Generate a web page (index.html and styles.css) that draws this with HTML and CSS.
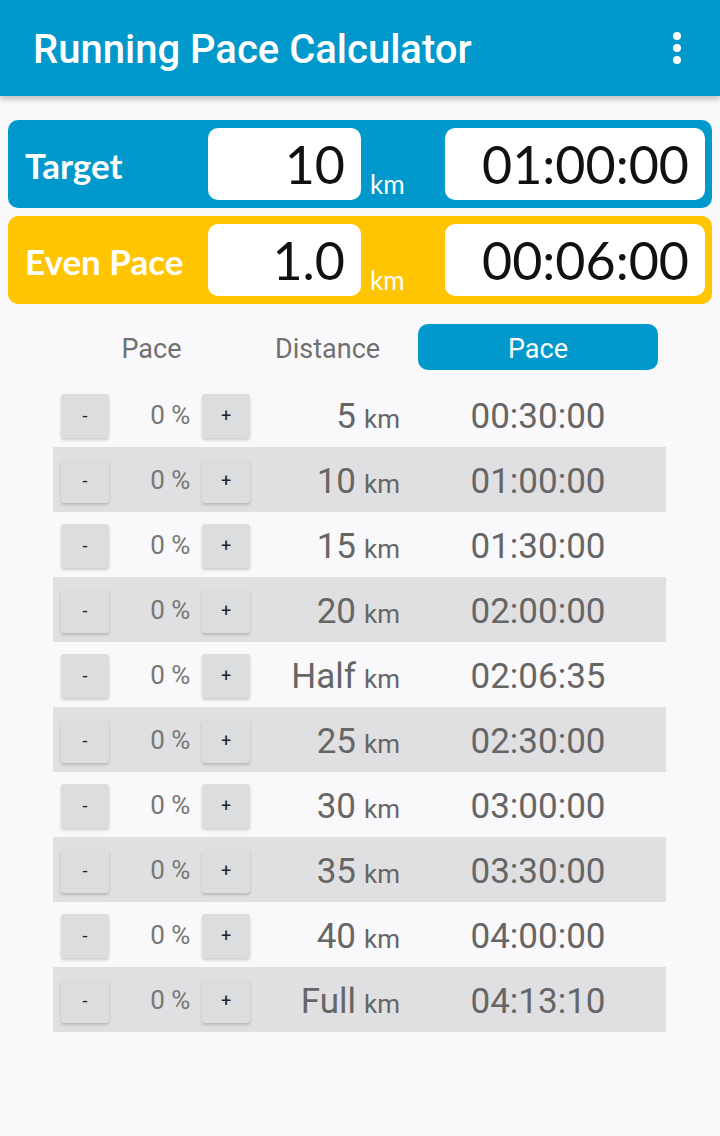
FILE: index.html
```html
<!DOCTYPE html>
<html>
<head>
<meta charset="utf-8">
<link rel="stylesheet" href="styles.css">
</head>
<body>
<header class="appbar">
  <h1 class="title">Running Pace Calculator</h1>
  <div class="menu"><span></span><span></span><span></span></div>
</header>
<main class="main">
  <section class="card card-blue">
    <div class="card-label">Target</div>
    <div class="box box-dist">10</div>
    <div class="unit">km</div>
    <div class="box box-time">01:00:00</div>
  </section>
  <section class="card card-yellow">
    <div class="card-label">Even Pace</div>
    <div class="box box-dist">1.0</div>
    <div class="unit">km</div>
    <div class="box box-time">00:06:00</div>
  </section>

  <div class="table">
    <div class="tabs">
      <div class="tab">Pace</div>
      <div class="tab tab-dist">Distance</div>
      <div class="tab tab-active">Pace</div>
    </div>
    <div class="row"><div class="adj"><button class="btn">-</button><span class="pct">0 %</span><button class="btn">+</button></div><div class="dist">5<span class="km">km</span></div><div class="time">00:30:00</div></div>
    <div class="row alt"><div class="adj"><button class="btn">-</button><span class="pct">0 %</span><button class="btn">+</button></div><div class="dist">10<span class="km">km</span></div><div class="time">01:00:00</div></div>
    <div class="row"><div class="adj"><button class="btn">-</button><span class="pct">0 %</span><button class="btn">+</button></div><div class="dist">15<span class="km">km</span></div><div class="time">01:30:00</div></div>
    <div class="row alt"><div class="adj"><button class="btn">-</button><span class="pct">0 %</span><button class="btn">+</button></div><div class="dist">20<span class="km">km</span></div><div class="time">02:00:00</div></div>
    <div class="row"><div class="adj"><button class="btn">-</button><span class="pct">0 %</span><button class="btn">+</button></div><div class="dist">Half<span class="km">km</span></div><div class="time">02:06:35</div></div>
    <div class="row alt"><div class="adj"><button class="btn">-</button><span class="pct">0 %</span><button class="btn">+</button></div><div class="dist">25<span class="km">km</span></div><div class="time">02:30:00</div></div>
    <div class="row"><div class="adj"><button class="btn">-</button><span class="pct">0 %</span><button class="btn">+</button></div><div class="dist">30<span class="km">km</span></div><div class="time">03:00:00</div></div>
    <div class="row alt"><div class="adj"><button class="btn">-</button><span class="pct">0 %</span><button class="btn">+</button></div><div class="dist">35<span class="km">km</span></div><div class="time">03:30:00</div></div>
    <div class="row"><div class="adj"><button class="btn">-</button><span class="pct">0 %</span><button class="btn">+</button></div><div class="dist">40<span class="km">km</span></div><div class="time">04:00:00</div></div>
    <div class="row alt"><div class="adj"><button class="btn">-</button><span class="pct">0 %</span><button class="btn">+</button></div><div class="dist">Full<span class="km">km</span></div><div class="time">04:13:10</div></div>
  </div>
</main>
</body>
</html>
```
FILE: styles.css
```css
* { box-sizing: border-box; }
html, body { margin: 0; padding: 0; }
body {
  width: 720px;
  height: 1136px;
  background: #f9f9fb;
  font-family: Roboto, "Liberation Sans", sans-serif;
  overflow: hidden;
}
.appbar {
  height: 96px;
  background: #0199cb;
  display: flex;
  align-items: center;
  justify-content: space-between;
  padding: 0 39px 0 33px;
  box-shadow: 0 3px 6px rgba(0,0,0,0.25);
  position: relative;
}
.title {
  margin: 0;
  color: #fff;
  font-family: Roboto, "Noto Sans", sans-serif;
  font-weight: 500;
  font-size: 40px;
  letter-spacing: 0;
  padding-top: 2px;
}
.menu {
  display: flex;
  flex-direction: column;
  gap: 4px;
  margin-top: 0;
}
.menu span {
  width: 8px;
  height: 8px;
  border-radius: 50%;
  background: #fff;
}
.main {
  padding: 24px 8px 0;
}
.card {
  height: 88px;
  border-radius: 10px;
  display: flex;
  align-items: center;
  padding: 8px 7px 8px 17px;
  margin-bottom: 8px;
}
.card-blue { background: #0199cb; }
.card-yellow { background: #ffc402; }
.card-label {
  width: 183px;
  color: #fff;
  font-family: Lato, sans-serif;
  font-weight: 700;
  font-size: 35px;
  padding-top: 2px;
}
.box {
  height: 72px;
  background: #fff;
  border-radius: 10px;
  display: flex;
  align-items: center;
  justify-content: flex-end;
  color: #111;
  font-family: Lato, sans-serif;
  font-size: 52px;
  padding-right: 16px;
}
.box-dist { width: 153px; }
.box-time { width: 260px; margin-left: auto; }
.unit {
  color: #fff;
  font-family: Lato, sans-serif;
  font-size: 26px;
  align-self: flex-end;
  margin: 0 0 0 9px;
}
.table {
  margin: 20px 46px 0 45px;
}
.tabs {
  display: grid;
  grid-template-columns: 197px 168px 240px;
  height: 46px;
  margin-bottom: 12px;
}
.tab {
  display: flex;
  align-items: center;
  justify-content: center;
  font-size: 27px;
  color: #707070;
  padding-top: 3px;
}
.tab-dist { justify-content: flex-start; padding-left: 25px; }
.tab-active {
  background: #0199cb;
  color: #fff;
  border-radius: 10px;
}
.row {
  height: 65px;
  display: grid;
  grid-template-columns: 197px 150px 18px 240px;
  grid-template-areas: "adj dist . time";
  align-items: center;
  color: #666;
}
.row.alt { background: #e0e0e2; }
.adj {
  grid-area: adj;
  display: flex;
  align-items: center;
  padding-left: 8px;
}
.btn {
  width: 48px;
  height: 44px;
  border: none;
  border-radius: 3px;
  background: #dcdddf;
  box-shadow: 0 2px 3px rgba(0,0,0,0.18);
  font-family: Roboto, sans-serif;
  font-size: 18px;
  color: #222;
  padding: 0;
  margin-top: 2px;
}
.pct {
  width: 94px;
  text-align: right;
  padding-right: 12px;
  font-size: 26px;
  color: #777;
}
.dist {
  grid-area: dist;
  text-align: right;
  font-size: 35px;
  padding-top: 4px;
}
.km {
  font-size: 26px;
  margin-left: 8px;
}
.time {
  grid-area: time;
  text-align: center;
  font-size: 35px;
  padding-top: 4px;
}
```
